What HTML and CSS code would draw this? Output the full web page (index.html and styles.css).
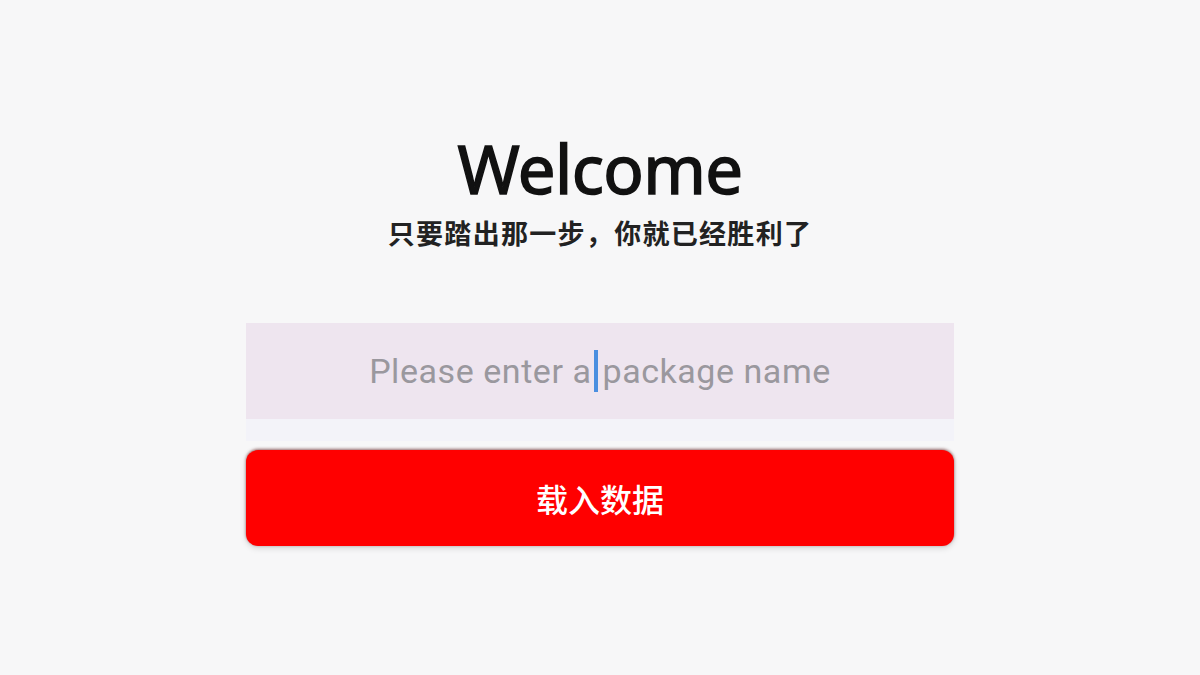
FILE: index.html
```html
<!DOCTYPE html>
<html lang="zh">
<head>
<meta charset="utf-8">
<title>Welcome</title>
<link rel="stylesheet" href="styles.css">
</head>
<body>
<main class="page">
  <section class="panel">
    <header class="hero">
      <h1 class="title">Welcome</h1>
      <p class="subtitle">只要踏出那一步，你就已经胜利了</p>
    </header>
    <div class="field">
      <div class="input">
        <span class="ph">Please enter a</span><span class="caret"></span><span class="ph">package name</span>
      </div>
      <div class="underline"></div>
    </div>
    <button class="btn" type="button">载入数据</button>
  </section>
</main>
</body>
</html>
```
FILE: styles.css
```css
html, body {
  margin: 0;
  padding: 0;
  background: #f7f7f8;
}
.page {
  width: 1200px;
  height: 675px;
  display: flex;
  justify-content: center;
  font-family: "Noto Sans", "Noto Sans CJK SC", sans-serif;
}
.panel {
  width: 708px;
  display: flex;
  flex-direction: column;
  padding-top: 123px;
}
.hero {
  display: flex;
  flex-direction: column;
  align-items: center;
}
.title {
  margin: 0;
  font-size: 67px;
  font-weight: 400;
  -webkit-text-stroke: 1.5px #111;
  line-height: 90px;
  color: #111;
  letter-spacing: -0.6px;
}
.subtitle {
  margin: 0;
  font-family: "Noto Sans CJK SC", sans-serif;
  font-size: 27px;
  font-weight: 700;
  letter-spacing: 1.3px;
  line-height: 40px;
  color: #222;
}
.field {
  margin-top: 70px;
  display: flex;
  flex-direction: column;
}
.input {
  height: 96px;
  background: #eee5ef;
  display: flex;
  align-items: center;
  justify-content: center;
  font-family: Roboto, "Noto Sans", sans-serif;
  font-size: 34px;
  letter-spacing: 0.55px;
  color: #9a989e;
}
.ph { white-space: pre; }
.caret {
  width: 4px;
  height: 42px;
  background: #4a8fe0;
  margin: 0 4px 0 3px;
}
.underline {
  height: 22px;
  background: #f3f3f9;
}
.btn {
  margin-top: 9px;
  height: 96px;
  border: none;
  border-radius: 12px;
  background: #ff0000;
  color: #fff;
  font-family: "Noto Sans CJK SC", sans-serif;
  font-size: 32px;
  font-weight: 500;
  box-shadow: 0 -1px 3px rgba(80, 0, 0, 0.55), 0 2px 6px rgba(0, 0, 0, 0.15);
}
```
